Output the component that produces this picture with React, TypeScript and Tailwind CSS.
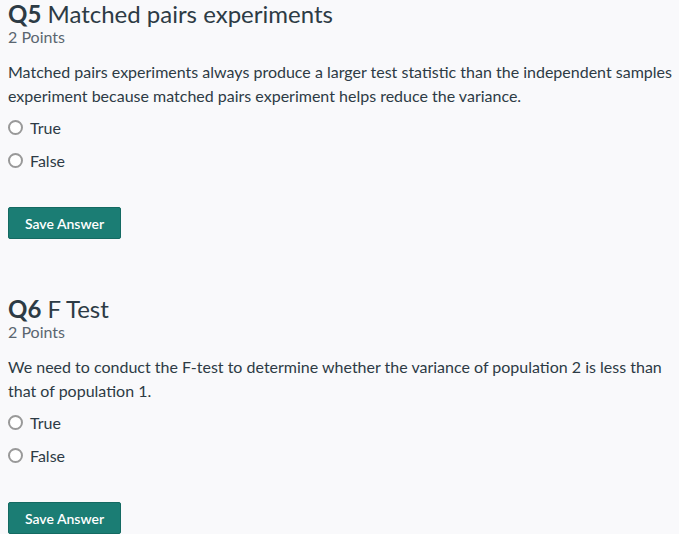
const questions = [
  {
    num: "Q5",
    title: "Matched pairs experiments",
    points: "2 Points",
    text: "Matched pairs experiments always produce a larger test statistic than the independent samples experiment because matched pairs experiment helps reduce the variance.",
  },
  {
    num: "Q6",
    title: "F Test",
    points: "2 Points",
    text: "We need to conduct the F-test to determine whether the variance of population 2 is less than that of population 1.",
  },
];

function Radio({ label }: { label: string }) {
  return (
    <label className="flex items-center gap-[7px] h-[33px] cursor-pointer">
      <span className="w-[15px] h-[15px] rounded-full border-2 border-[#999999] bg-white" />
      <span className="text-[16px] text-[#2d3b45]">{label}</span>
    </label>
  );
}

function Question({ q }: { q: (typeof questions)[number] }) {
  return (
    <section className="flex flex-col">
      <h2 className="text-[24px] leading-[28px] text-[#2d3b45]">
        <span className="font-bold">{q.num}</span> {q.title}
      </h2>
      <div className="text-[16px] leading-[18px] text-[#5b6670]">{q.points}</div>
      <p className="mt-[14px] pr-[4px] text-[16px] leading-[24px] text-[#2d3b45]">{q.text}</p>
      <div className="mt-[3px] flex flex-col">
        <Radio label="True" />
        <Radio label="False" />
      </div>
      <div className="mt-[30px]">
        <button className="h-[32px] w-[113px] rounded-[2px] border border-[#146a62] bg-[#1b7d74] text-[14px] font-semibold text-white">
          Save Answer
        </button>
      </div>
    </section>
  );
}

export default function App() {
  return (
    <div
      className="min-h-[534px] bg-[#f9f9fb] pl-[8px] flex flex-col gap-[56px]"
      style={{ fontFamily: "Lato, 'Liberation Sans', sans-serif" }}
    >
      {questions.map((q) => (
        <Question key={q.num} q={q} />
      ))}
    </div>
  );
}
